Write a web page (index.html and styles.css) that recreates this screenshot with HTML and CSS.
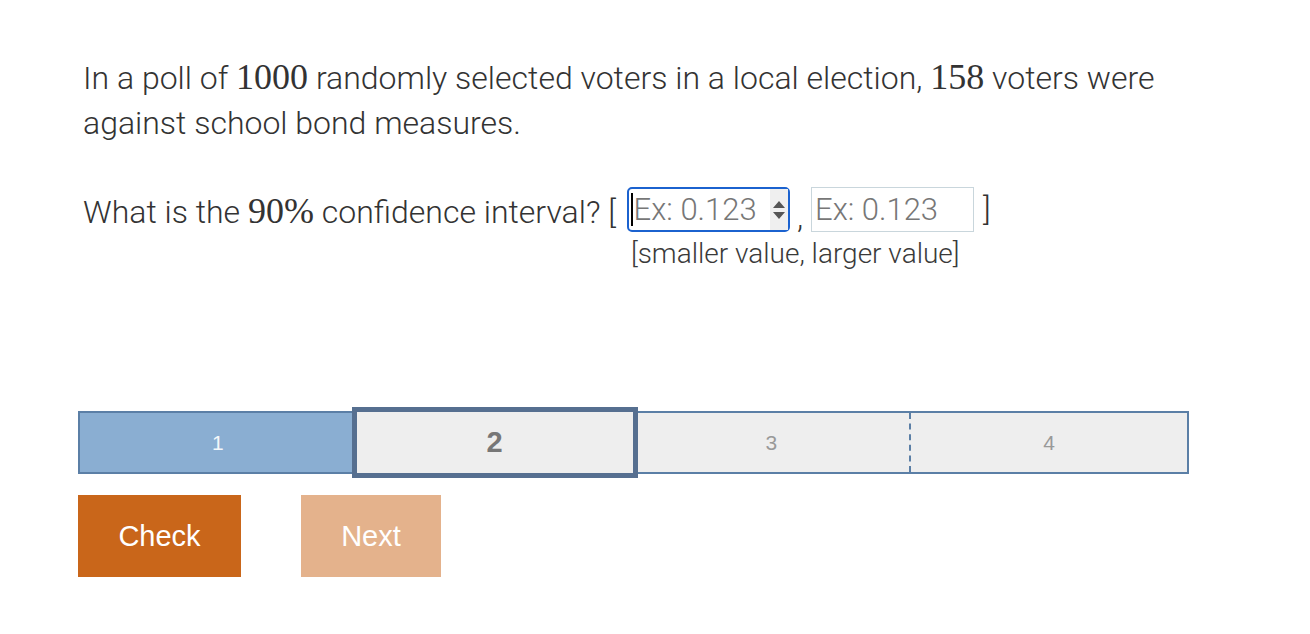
FILE: index.html
```html
<!DOCTYPE html>
<html lang="en">
<head>
    <meta charset="UTF-8">
    <title>Confidence Interval</title>
    <link rel="stylesheet" href="styles.css">
</head>
<body>
    <div class="page">
        <!-- Question text -->
        <p class="stem">
            In a poll of <span class="math">1000</span> randomly selected voters in a local election, <span class="math">158</span> voters were against school bond measures.
        </p>
        <div class="question">
            <span class="prompt">What is the <span class="math">90%</span> confidence interval? [</span>
            <div class="answers">
                <div class="fields">
                    <div class="field focused">
                        <span class="caret"></span>
                        <input type="text" placeholder="Ex: 0.123">
                        <span class="spinner">
                            <svg width="14" height="24" viewBox="0 0 14 24"><path d="M7 3 L13 10 L1 10 Z M1 14 L13 14 L7 21 Z" fill="#555"/></svg>
                        </span>
                    </div>
                    <span class="comma">,</span>
                    <div class="field">
                        <input type="text" placeholder="Ex: 0.123">
                    </div>
                    <span class="bracket">]</span>
                </div>
                <div class="hint">[smaller value, larger value]</div>
            </div>
        </div>
        <!-- Step tracker -->
        <div class="steps">
            <div class="step done">1</div>
            <div class="step current">2</div>
            <div class="step">3</div>
            <div class="step dashed">4</div>
        </div>
        <div class="buttons">
            <button class="btn check">Check</button>
            <button class="btn next">Next</button>
        </div>
    </div>
</body>
</html>
```

FILE: styles.css
```css
body {
    margin: 0;
    background: white;
    color: #333;
    font-family: Roboto, "Noto Sans", sans-serif;
    font-weight: 300;
}
.page {
    width: 1111px;
    margin-left: 78px;
    padding-top: 56px;
}
.stem {
    margin: 0;
    padding-left: 5px;
    font-size: 32px;
    line-height: 45px;
    width: 1100px;
}
.math {
    font-family: "Liberation Serif", "DejaVu Serif", serif;
    font-weight: 400;
    font-size: 36px;
    line-height: 1;
}
.question {
    display: flex;
    align-items: flex-start;
    margin-top: 41px;
    padding-left: 5px;
}
.prompt {
    font-size: 32px;
    line-height: 45px;
    padding-top: 3px;
    margin-right: 11px;
}
.answers {
    display: flex;
    flex-direction: column;
}
.fields {
    display: flex;
    align-items: flex-start;
    height: 45px;
}
.field {
    display: flex;
    align-items: stretch;
    height: 45px;
    box-sizing: border-box;
    border: 1px solid #c9d6dc;
    width: 163px;
    background: white;
}
.field.focused {
    border: 2px solid #1b62cf;
    border-radius: 5px;
}
.caret {
    width: 2px;
    background: #000;
    margin: 4px 0 4px 2px;
}
.field input {
    border: none;
    outline: none;
    width: 100%;
    min-width: 0;
    padding: 0 3px;
    font-family: Roboto, sans-serif;
    font-size: 31px;
    font-weight: 300;
    color: #333;
    background: transparent;
}
.field.focused input {
    padding-left: 1px;
}
.field input::placeholder {
    color: #777;
}
.spinner {
    display: flex;
    align-items: center;
    justify-content: center;
    width: 22px;
    background: #efefef;
}
.comma {
    box-sizing: border-box;
    height: 45px;
    font-size: 32px;
    line-height: 45px;
    padding-top: 8px;
    margin: 0 8px 0 7px;
}
.bracket {
    font-size: 32px;
    line-height: 45px;
    margin-left: 9px;
}
.hint {
    font-size: 28px;
    line-height: 32px;
    margin-top: 6px;
    padding-left: 4px;
    color: #3a3a3a;
}
.steps {
    display: flex;
    height: 63px;
    box-sizing: border-box;
    border: 2px solid #5b7fa6;
    background: #eeeeee;
    margin-top: 141px;
}
.step {
    flex: 1;
    display: flex;
    align-items: center;
    justify-content: center;
    font-family: "Liberation Sans", Arial, sans-serif;
    font-size: 21px;
    color: #999;
}
.step.done {
    background: #8aaed2;
    color: #f4f7fa;
}
.step.current {
    margin: -6px -4px;
    border: 5px solid #566f90;
    font-size: 29px;
    font-weight: 700;
    color: #777;
    background: #eeeeee;
}
.step.dashed {
    border-left: 2px dashed #5b7fa6;
}
.buttons {
    display: flex;
    gap: 60px;
    margin-top: 21px;
}
.btn {
    height: 82px;
    border: none;
    color: white;
    font-family: "Liberation Sans", Arial, sans-serif;
    font-size: 29px;
    padding: 0;
}
.check {
    width: 163px;
    background: #c9661a;
}
.next {
    width: 140px;
    background: #e4b28c;
}
```
